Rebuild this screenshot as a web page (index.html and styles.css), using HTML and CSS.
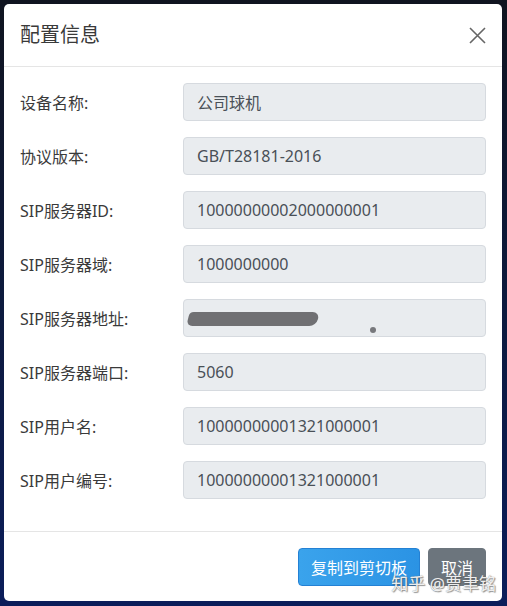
FILE: index.html
```html
<!DOCTYPE html>
<html lang="zh-CN">
<head>
<meta charset="utf-8">
<title>配置信息</title>
<link rel="stylesheet" href="styles.css">
</head>
<body>
<div class="dialog">
  <div class="dialog-header">
    <h4 class="dialog-title">配置信息</h4>
    <span class="close-btn">
      <svg width="17" height="17" viewBox="0 0 17 17"><path d="M1 1 L16 16 M16 1 L1 16" stroke="#666" stroke-width="1.6" fill="none"/></svg>
    </span>
  </div>
  <div class="dialog-body">
    <div class="form-row"><label class="form-label">设备名称:</label><div class="form-input">公司球机</div></div>
    <div class="form-row"><label class="form-label">协议版本:</label><div class="form-input">GB/T28181-2016</div></div>
    <div class="form-row"><label class="form-label">SIP服务器ID:</label><div class="form-input">10000000002000000001</div></div>
    <div class="form-row"><label class="form-label">SIP服务器域:</label><div class="form-input">1000000000</div></div>
    <div class="form-row"><label class="form-label">SIP服务器地址:</label><div class="form-input redacted-box"><span class="redacted"></span><span class="redacted-dot"></span></div></div>
    <div class="form-row"><label class="form-label">SIP服务器端口:</label><div class="form-input">5060</div></div>
    <div class="form-row"><label class="form-label">SIP用户名:</label><div class="form-input">10000000001321000001</div></div>
    <div class="form-row"><label class="form-label">SIP用户编号:</label><div class="form-input">10000000001321000001</div></div>
  </div>
  <div class="dialog-footer">
    <button class="btn btn-primary">复制到剪切板</button>
    <button class="btn btn-secondary">取消</button>
    <span class="watermark">知乎 @贾聿铭</span>
  </div>
</div>
</body>
</html>
```

FILE: styles.css
```css
html, body {
  margin: 0;
  padding: 0;
  width: 507px;
  height: 606px;
  overflow: hidden;
}
body {
  background: linear-gradient(180deg, #101420 0%, #0d1a3e 50%, #0b1d5a 100%);
  font-family: "Noto Sans", "Noto Sans CJK SC", sans-serif;
  color: #333;
}
.dialog {
  position: relative;
  margin: 4px 0 0 4px;
  width: 498px;
  height: 597px;
  background: #fff;
  border-radius: 5px;
  display: flex;
  flex-direction: column;
  box-sizing: border-box;
}
.dialog-header {
  height: 63px;
  box-sizing: border-box;
  border-bottom: 1px solid #e5e5e5;
  display: flex;
  align-items: center;
  justify-content: space-between;
  padding: 0 16px 0 16px;
}
.dialog-title {
  margin: 0;
  font-size: 20px;
  font-weight: normal;
  color: #3a3a3a;
  line-height: 1;
}
.close-btn {
  display: flex;
  width: 17px;
  height: 17px;
}
.dialog-body {
  padding: 16px 16px 0 16px;
  flex: 1;
}
.form-row {
  display: flex;
  align-items: center;
  height: 38px;
  margin-bottom: 16px;
}
.form-label {
  width: 163px;
  font-size: 16px;
  color: #3a3a3a;
}
.form-input {
  width: 303px;
  height: 38px;
  box-sizing: border-box;
  background: #e9ecef;
  border: 1px solid #d6dadf;
  border-radius: 4px;
  padding: 0 13px;
  display: flex;
  align-items: center;
  font-size: 16px;
  color: #495057;
}
.redacted-box {
  position: relative;
}
.redacted {
  position: absolute;
  left: 4px;
  top: 12px;
  width: 130px;
  height: 14px;
  background: #707073;
  border-radius: 4px 7px 7px 6px;
  transform: skewX(-14deg);
}
.redacted-dot {
  position: absolute;
  left: 186px;
  top: 27px;
  width: 6px;
  height: 6px;
  border-radius: 50%;
  background: #77787c;
}
.dialog-footer {
  border-top: 1px solid #e5e5e5;
  height: 70px;
  box-sizing: border-box;
  display: flex;
  justify-content: flex-end;
  align-items: center;
  gap: 8px;
  padding: 0 16px;
  position: relative;
}
.btn {
  height: 38px;
  border-radius: 4px;
  font-family: "Noto Sans", "Noto Sans CJK SC", sans-serif;
  font-size: 16px;
  color: #fff;
  padding: 0 12px;
  cursor: pointer;
}
.btn-primary {
  width: 122px;
  background: linear-gradient(90deg, #3aa3ec 0%, #2b93e4 100%);
  border: 1px solid #2481d4;
}
.btn-secondary {
  width: 58px;
  background: #6c757d;
  border: 1px solid #6c757d;
}
.watermark {
  position: absolute;
  right: 6px;
  bottom: 6px;
  font-size: 17px;
  color: rgba(255,255,255,0.9);
  text-shadow: 0 0 1px #777, 1px 1px 1px rgba(80,80,80,0.6);
  pointer-events: none;
}
```
